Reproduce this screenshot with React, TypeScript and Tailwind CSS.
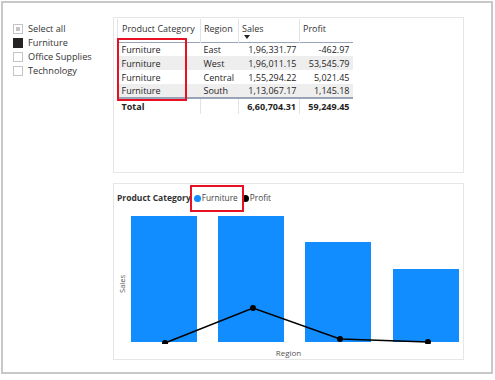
const font = { fontFamily: '"Open Sans", "Noto Sans", sans-serif' };

const rows = [
  { cat: 'Furniture', region: 'East', sales: '1,96,331.77', profit: '-462.97' },
  { cat: 'Furniture', region: 'West', sales: '1,96,011.15', profit: '53,545.79' },
  { cat: 'Furniture', region: 'Central', sales: '1,55,294.22', profit: '5,021.45' },
  { cat: 'Furniture', region: 'South', sales: '1,13,067.17', profit: '1,145.18' },
];

const slicerItems = ['Furniture', 'Office Supplies', 'Technology'];

const bars = [
  { x: 17, top: 4 },
  { x: 104, top: 4 },
  { x: 191, top: 30 },
  { x: 279, top: 57 },
];

const points = [
  [51, 131],
  [139, 96],
  [226, 127],
  [314, 130],
];

function Slicer() {
  return (
    <div className="w-[110px] pl-[10px] pt-[21px] flex flex-col gap-[4px] text-[9.2px] text-[#333] whitespace-nowrap">
      <div className="flex items-center gap-[5px] h-[10px]">
        <span className="w-[10px] h-[10px] border border-[#c4c4c4] flex items-center justify-center">
          <span className="w-[4px] h-[4px] bg-[#c4c4c4]" />
        </span>
        <span>Select all</span>
      </div>
      {slicerItems.map((s, i) => (
        <div key={s} className="flex items-center gap-[5px] h-[10px]">
          <span className={i === 0 ? 'w-[10px] h-[10px] bg-[#252423]' : 'w-[10px] h-[10px] border border-[#c4c4c4]'} />
          <span>{s}</span>
        </div>
      ))}
    </div>
  );
}

function TablePanel() {
  return (
    <div className="relative h-[156px] border border-[#e6e6e6] pl-[3px] pt-[1px]">
      <table className="border-collapse text-[9px] text-[#252423] leading-none whitespace-nowrap" style={{ tableLayout: 'fixed' }}>
        <colgroup>
          <col className="w-[83px]" />
          <col className="w-[38px]" />
          <col className="w-[61px]" />
          <col className="w-[53px]" />
        </colgroup>
        <thead>
          <tr className="h-[23px] border-b border-[#9aa4b8]">
            <th className="font-normal text-left align-top pt-[5px] pl-[4px] border-l border-[#dfe3ea] text-[#333]">Product Category</th>
            <th className="font-normal text-left align-top pt-[5px] pl-[3px] border-l border-[#dfe3ea] text-[#333]">Region</th>
            <th className="font-normal text-left align-top pt-[5px] pl-[3px] border-l border-[#dfe3ea] text-[#333]">
              <div>Sales</div>
              <div className="ml-[2px] mt-[2px] w-0 h-0 border-l-[3px] border-r-[3px] border-t-[4px] border-l-transparent border-r-transparent border-t-[#252423]" />
            </th>
            <th className="font-normal text-left align-top pt-[5px] pl-[3px] border-l border-[#dfe3ea] text-[#333]">Profit</th>
          </tr>
        </thead>
        <tbody>
          {rows.map((r, i) => (
            <tr key={r.region} className={i % 2 === 1 ? 'h-[14px] bg-[#eeeeee]' : 'h-[14px]'}>
              <td className="pl-[4px]">{r.cat}</td>
              <td className="pl-[3px]">{r.region}</td>
              <td className="text-right pr-[3px]">{r.sales}</td>
              <td className="text-right pr-[3px]">{r.profit}</td>
            </tr>
          ))}
          <tr className="h-[16px] border-t-2 border-[#9aa4b8] font-bold">
            <td className="pl-[4px]">Total</td>
            <td className="border-l border-[#dfe3ea]" />
            <td className="text-right pr-[3px] border-l border-[#dfe3ea]">6,60,704.31</td>
            <td className="text-right pr-[3px] border-l border-[#dfe3ea]">59,249.45</td>
          </tr>
        </tbody>
      </table>
      {/* highlight */}
      <div className="absolute left-[3px] top-[20px] w-[70px] h-[63px] border-2 border-[#e81123]" />
    </div>
  );
}

function ChartPanel() {
  return (
    <div className="relative mt-[10px] h-[177px] border border-[#e6e6e6]">
      <div className="flex items-center h-[28px] pl-[3px] text-[8.3px] text-[#252423] whitespace-nowrap">
        <span className="font-bold text-[8.5px] text-[#333]">Product Category</span>
        <span className="ml-[3px] w-[7px] h-[7px] rounded-full bg-[#118dff]" />
        <span className="ml-[1px] text-[#444]">Furniture</span>
        <span className="ml-[4px] w-[7px] h-[7px] rounded-full bg-black" />
        <span className="ml-[1px] text-[#444]">Profit</span>
      </div>
      <svg width="349" height="132" className="block">
        <text x="0" y="0" transform="translate(11 72) rotate(-90)" textAnchor="middle" fontSize="7.5" fill="#555" style={font}>Sales</text>
        {bars.map((b) => (
          <rect key={b.x} x={b.x} y={b.top} width="66" height={132 - b.top - 2} fill="#118dff" />
        ))}
        <polyline points={points.map((p) => p.join(',')).join(' ')} fill="none" stroke="#000" strokeWidth="1.5" />
        {points.map((p) => (
          <circle key={p[0]} cx={p[0]} cy={p[1]} r="3" fill="#000" />
        ))}
      </svg>
      <div className="text-center text-[8px] text-[#555] leading-none mt-[5px]">Region</div>
      <div className="absolute left-[76px] top-[1px] w-[54px] h-[27px] border-2 border-[#e81123]" />
    </div>
  );
}

export default function App() {
  return (
    <div className="bg-white w-[495px] h-[380px]" style={font}>
      <div className="ml-[1px] mt-[1px] w-[492px] h-[373px] border-2 border-[#c8c8c8] flex">
        <Slicer />
        <div className="w-[351px] pt-[14px]">
          <TablePanel />
          <ChartPanel />
        </div>
      </div>
    </div>
  );
}
